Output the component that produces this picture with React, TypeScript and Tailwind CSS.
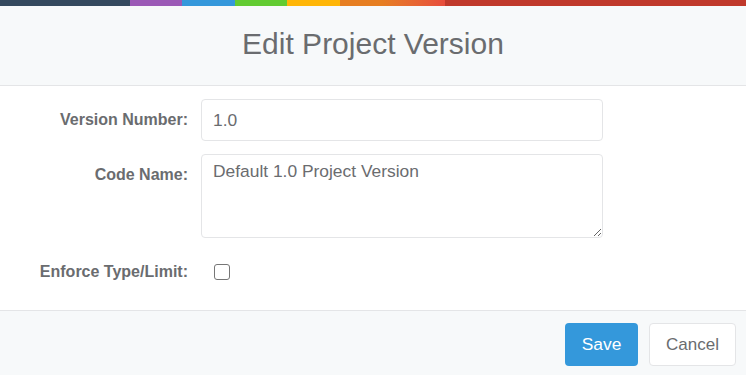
import React from "react";

export default function App() {
  const font = { fontFamily: '"Liberation Sans", Arial, sans-serif' };
  return (
    <div className="w-[746px] h-[375px] flex flex-col bg-white text-[#6a6c6f] overflow-hidden" style={font}>
      <div className="flex h-[6px] shrink-0">
        <div className="w-[130px] bg-[#34495e]" />
        <div className="w-[52px] bg-[#9b59b6]" />
        <div className="w-[53px] bg-[#3498db]" />
        <div className="w-[52px] bg-[#62cb31]" />
        <div className="w-[53px] bg-[#ffb606]" />
        <div className="w-[105px] bg-gradient-to-r from-[#e67e22] from-40% to-[#e74c3c]" />
        <div className="flex-1 bg-[#c0392b]" />
      </div>
      <div className="h-[80px] shrink-0 flex items-center justify-center bg-[#f7f9fa] border-b border-[#e4e5e7] pb-[3px]">
        <h1 className="text-[30px] font-normal leading-none text-[#6a6c6f]">Edit Project Version</h1>
      </div>
      <div className="flex flex-col gap-[13px] pt-[13px] pb-[15px] h-[224px] shrink-0">
        <div className="flex items-start gap-[13px]">
          <label className="w-[188px] h-[42px] flex items-center justify-end text-[16px] font-bold">Version Number:</label>
          <div className="w-[402px] h-[42px] border border-[#e4e5e7] rounded-[4px] flex items-center px-[11px] text-[17.4px]">1.0</div>
        </div>
        <div className="flex items-start gap-[13px]">
          <label className="w-[188px] h-[42px] flex items-center justify-end text-[16px] font-bold">Code Name:</label>
          <textarea
            readOnly
            defaultValue="Default 1.0 Project Version"
            className="w-[402px] h-[84px] border border-[#e4e5e7] rounded-[4px] px-[11px] pt-[4px] text-[17.4px] leading-[24px] text-[#6a6c6f] outline-none resize-y"
            style={font}
          />
        </div>
        <div className="flex items-center gap-[13px] h-[42px]">
          <label className="w-[188px] flex items-center justify-end text-[16px] font-bold">Enforce Type/Limit:</label>
          <span className="ml-[13px] w-[16px] h-[16px] border border-[#767676] rounded-[3px] bg-white" />
        </div>
      </div>
      <div className="flex-1 bg-[#f7f9fa] border-t border-[#e4e5e7] flex justify-end items-start pt-[12px] pr-[10px] gap-[11px]">
        <button className="w-[73px] h-[43px] rounded-[4px] bg-[#3498db] text-white text-[17.4px]" style={font}>Save</button>
        <button className="w-[87px] h-[43px] rounded-[4px] bg-white border border-[#e4e5e7] text-[#6a6c6f] text-[17px]" style={font}>Cancel</button>
      </div>
    </div>
  );
}
